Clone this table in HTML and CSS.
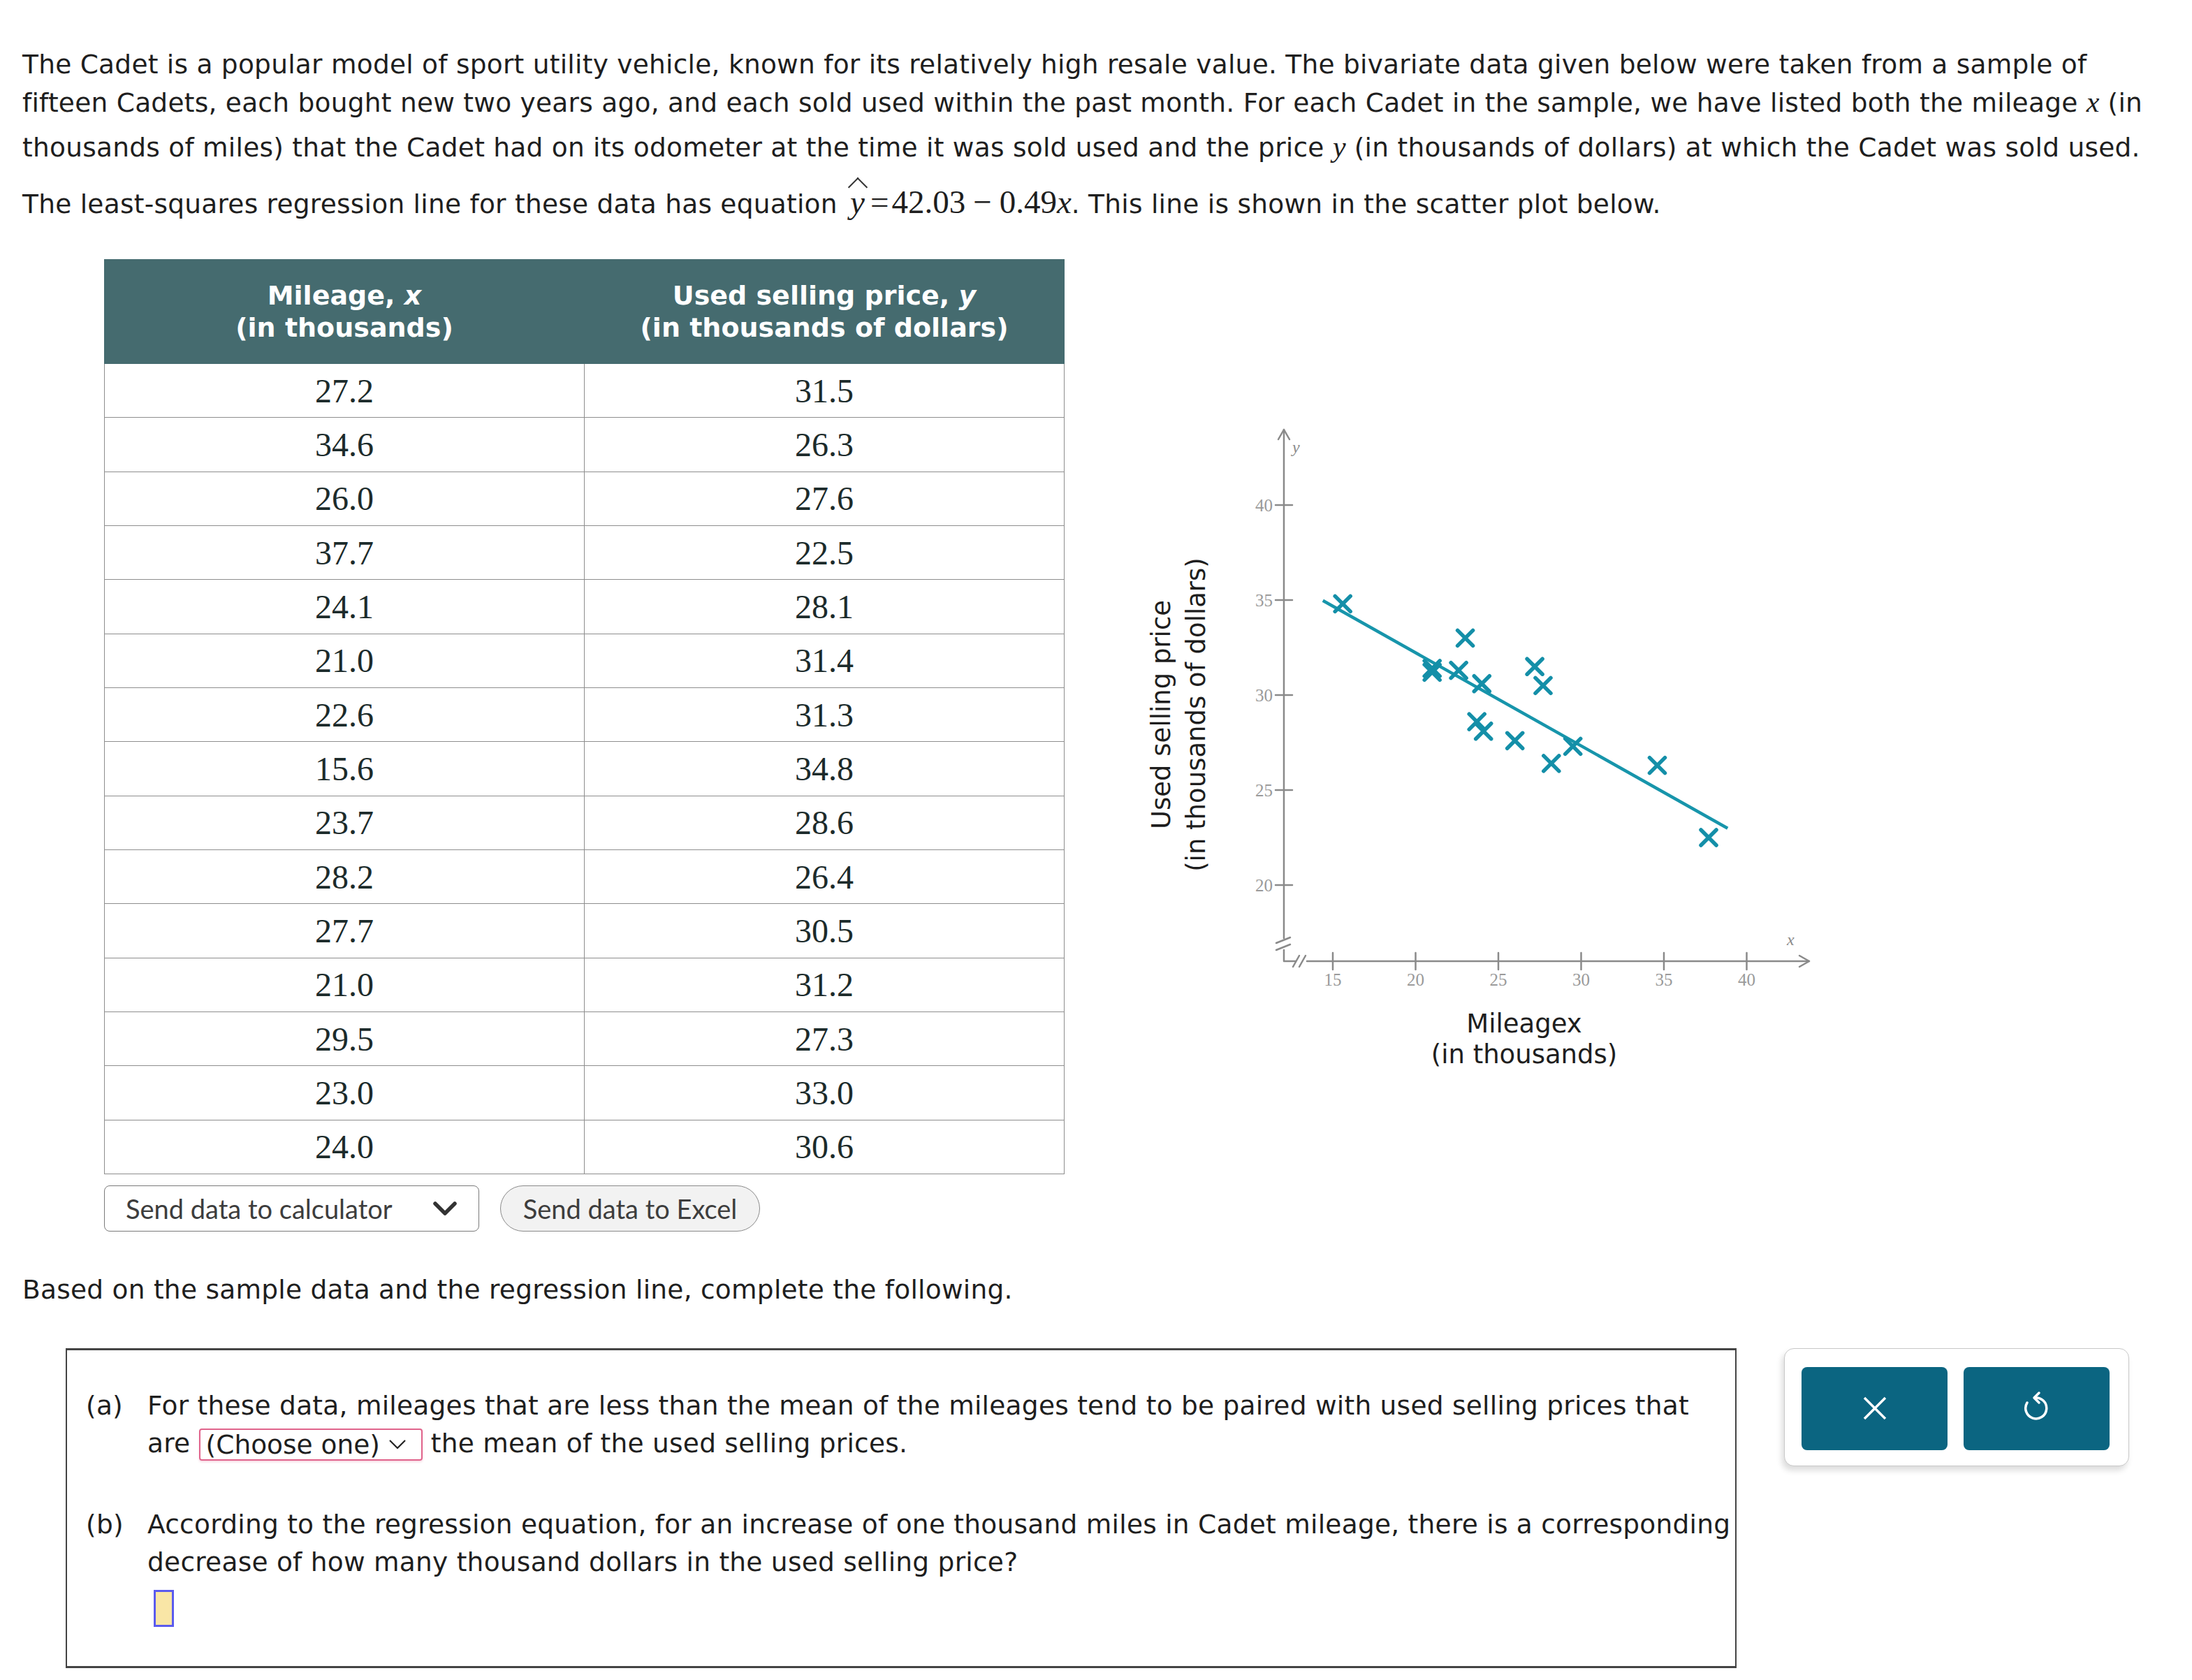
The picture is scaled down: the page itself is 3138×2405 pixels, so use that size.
FILE: index.html
```html
<!DOCTYPE html>
<html lang="en">
<head>
<meta charset="utf-8">
<title>Cadet regression</title>
<link rel="stylesheet" href="styles.css">
</head>
<body>
<div class="page">
  <p class="intro">The Cadet is a popular model of sport utility vehicle, known for its relatively high resale value. The bivariate data given below were taken from a sample of<br>fifteen Cadets, each bought new two years ago, and each sold used within the past month. For each Cadet in the sample, we have listed both the mileage <span class="mv">x</span> (in<br>thousands of miles) that the Cadet had on its odometer at the time it was sold used and the price <span class="mv">y</span> (in thousands of dollars) at which the Cadet was sold used.<br>The least-squares regression line for these data has equation <span class="eq"><span class="mv hat">y</span><span class="op op-eq">=</span>42.03<span class="op">&minus;</span>0.49<span class="mvi">x</span></span>. This line is shown in the scatter plot below.</p>

  <div class="data-row">
    <div class="table-col">
      <table class="data-table">
        <thead>
          <tr><th>Mileage, <i>x</i><br>(in thousands)</th><th>Used selling price, <i>y</i><br>(in thousands of dollars)</th></tr>
        </thead>
        <tbody>
          <tr><td>27.2</td><td>31.5</td></tr>
          <tr><td>34.6</td><td>26.3</td></tr>
          <tr><td>26.0</td><td>27.6</td></tr>
          <tr><td>37.7</td><td>22.5</td></tr>
          <tr><td>24.1</td><td>28.1</td></tr>
          <tr><td>21.0</td><td>31.4</td></tr>
          <tr><td>22.6</td><td>31.3</td></tr>
          <tr><td>15.6</td><td>34.8</td></tr>
          <tr><td>23.7</td><td>28.6</td></tr>
          <tr><td>28.2</td><td>26.4</td></tr>
          <tr><td>27.7</td><td>30.5</td></tr>
          <tr><td>21.0</td><td>31.2</td></tr>
          <tr><td>29.5</td><td>27.3</td></tr>
          <tr><td>23.0</td><td>33.0</td></tr>
          <tr><td>24.0</td><td>30.6</td></tr>
        </tbody>
      </table>
      <div class="actions">
        <div class="calc-select"><span>Send data to calculator</span>
          <svg class="chev" width="36" height="22" viewBox="0 0 36 22"><polyline points="4,4 18,18 32,4" fill="none" stroke="#333" stroke-width="5.5" stroke-linecap="round" stroke-linejoin="round"/></svg>
        </div>
        <div class="excel-btn">Send data to Excel</div>
      </div>
    </div>

    <svg class="chart" width="1040" height="1000" viewBox="1600 580 1040 1000">
      <defs>
        <path id="mk" d="M-11 -11 L11 11 M11 -11 L-11 11" fill="none" stroke="#148fa8" stroke-width="5.5" stroke-linecap="round"/>
      </defs>
      <g stroke="#8a8a8a" stroke-width="2.5" fill="none" stroke-linecap="round" stroke-linejoin="round">
        <line x1="1838" y1="612" x2="1838" y2="1340"/>
        <line x1="1827" y1="1347" x2="1847" y2="1339"/>
        <line x1="1827" y1="1357" x2="1847" y2="1349"/>
        <polyline points="1838,1357 1838,1373 1855,1373"/>
        <line x1="1851" y1="1381" x2="1860" y2="1365"/>
        <line x1="1860" y1="1381" x2="1869" y2="1365"/>
        <line x1="1871" y1="1373" x2="2590" y2="1373"/>
        <polyline points="1830,626 1838,612 1846,626"/>
        <polyline points="2576,1365 2590,1373 2576,1381"/>
        <line x1="1826" y1="720" x2="1850" y2="720"/>
        <line x1="1826" y1="856" x2="1850" y2="856"/>
        <line x1="1826" y1="992" x2="1850" y2="992"/>
        <line x1="1826" y1="1128" x2="1850" y2="1128"/>
        <line x1="1826" y1="1264" x2="1850" y2="1264"/>
        <line x1="1908" y1="1361" x2="1908" y2="1385"/>
        <line x1="2026.5" y1="1361" x2="2026.5" y2="1385"/>
        <line x1="2145" y1="1361" x2="2145" y2="1385"/>
        <line x1="2263.5" y1="1361" x2="2263.5" y2="1385"/>
        <line x1="2382" y1="1361" x2="2382" y2="1385"/>
        <line x1="2500.5" y1="1361" x2="2500.5" y2="1385"/>
      </g>
      <g class="tick-lab ylab">
        <text x="1822" y="729">40</text>
        <text x="1822" y="865">35</text>
        <text x="1822" y="1001">30</text>
        <text x="1822" y="1137">25</text>
        <text x="1822" y="1273">20</text>
      </g>
      <g class="tick-lab xlab">
        <text x="1908" y="1408">15</text>
        <text x="2026.5" y="1408">20</text>
        <text x="2145" y="1408">25</text>
        <text x="2263.5" y="1408">30</text>
        <text x="2382" y="1408">35</text>
        <text x="2500.5" y="1408">40</text>
      </g>
      <text class="axis-var" x="1850" y="645">y</text>
      <text class="axis-var" x="2558" y="1350">x</text>
      <line x1="1893.8" y1="856.7" x2="2473.2" y2="1182.7" stroke="#1795ab" stroke-width="4.5"/>
      <g>
        <use href="#mk" x="2197.1" y="951.2"/>
        <use href="#mk" x="2372.5" y="1092.6"/>
        <use href="#mk" x="2168.7" y="1057.3"/>
        <use href="#mk" x="2446" y="1196"/>
        <use href="#mk" x="2123.7" y="1043.7"/>
        <use href="#mk" x="2050.2" y="953.9"/>
        <use href="#mk" x="2088.1" y="956.6"/>
        <use href="#mk" x="1922.2" y="861.4"/>
        <use href="#mk" x="2114.2" y="1030.1"/>
        <use href="#mk" x="2220.8" y="1089.9"/>
        <use href="#mk" x="2209" y="978.4"/>
        <use href="#mk" x="2050.2" y="959.4"/>
        <use href="#mk" x="2251.7" y="1065.4"/>
        <use href="#mk" x="2097.6" y="910.4"/>
        <use href="#mk" x="2121.3" y="975.7"/>
      </g>
      <g class="axis-title">
        <text x="1662" y="1020" transform="rotate(-90 1662 1020)">Used selling price</text>
        <text x="1712" y="1020" transform="rotate(-90 1712 1020)">(in thousands of dollars)</text>
        <text x="2182" y="1462">Mileagex</text>
        <text x="2182" y="1506">(in thousands)</text>
      </g>
    </svg>
  </div>

  <p class="prompt">Based on the sample data and the regression line, complete the following.</p>

  <div class="question-row">
    <div class="qbox">
      <div class="part">
        <div class="plabel">(a)</div>
        <div class="ptext">For these data, mileages that are less than the mean of the mileages tend to be paired with used selling prices that<br>are <span class="choose">(Choose one)<svg class="thin-chev" width="26" height="16" viewBox="0 0 26 16"><polyline points="2,2 13,13 24,2" fill="none" stroke="#222" stroke-width="2.2"/></svg></span> the mean of the used selling prices.</div>
      </div>
      <div class="part part-b">
        <div class="plabel">(b)</div>
        <div class="ptext">According to the regression equation, for an increase of one thousand miles in Cadet mileage, there is a corresponding<br>decrease of how many thousand dollars in the used selling price?
          <span class="answer"></span>
        </div>
      </div>
    </div>
    <div class="tools">
      <button class="tool-btn" aria-label="Clear">
        <svg width="36" height="36" viewBox="0 0 36 36"><path d="M3 3 L33 33 M33 3 L3 33" stroke="#fff" stroke-width="3.5" fill="none"/></svg>
      </button>
      <button class="tool-btn" aria-label="Undo">
        <svg width="44" height="50" viewBox="0 0 44 50"><path d="M19 10 A15 15 0 1 1 8 17" fill="none" stroke="#fff" stroke-width="3.5" stroke-linecap="round"/><polyline points="25,3 18,10 25,17" fill="none" stroke="#fff" stroke-width="3.5" stroke-linecap="round" stroke-linejoin="round"/></svg>
      </button>
    </div>
  </div>
</div>
</body>
</html>
```

FILE: styles.css
```css
* { box-sizing: border-box; }

body {
  margin: 0;
  background: #ffffff;
  font-family: "DejaVu Sans", Verdana, sans-serif;
  color: #1e1e1e;
}

.page {
  padding: 65px 40px 40px 32px;
}

.intro {
  margin: 0;
  font-size: 37.5px;
  letter-spacing: 0.25px;
  line-height: 55px;
  white-space: nowrap;
}

.mv {
  display: inline-block;
  font-family: "Liberation Serif", "Times New Roman", serif;
  font-style: italic;
  font-size: 42px;
  line-height: 40px;
  padding-bottom: 18px;
  letter-spacing: 0;
}

.eq {
  font-family: "Liberation Serif", "Times New Roman", serif;
  font-size: 47px;
  letter-spacing: 0;
  margin-left: 6px;
}

.eq .op {
  margin: 0 11px;
}

.eq .op.op-eq {
  margin-left: 8px;
  margin-right: 4px;
}

.mv.hat {
  position: relative;
  font-size: 47px;
  padding-bottom: 0;
  padding-top: 21px;
}

.mv.hat::before {
  content: "";
  position: absolute;
  left: 55%;
  top: 10px;
  width: 18px;
  height: 18px;
  border-top: 2px solid #333;
  border-left: 2px solid #333;
  transform: translateX(-50%) rotate(45deg);
}

.mvi {
  font-style: italic;
}

.data-row {
  display: flex;
  align-items: flex-start;
  margin-top: 51px;
}

.table-col {
  margin-left: 117px;
  width: 1375px;
}

.data-table {
  width: 1375px;
  border-collapse: collapse;
  table-layout: fixed;
}

.data-table th {
  background: #456b6f;
  color: #ffffff;
  font-weight: bold;
  font-size: 38px;
  line-height: 46px;
  padding: 28px 0;
  border: 1px solid #456b6f;
}

.data-table th + th {
  border-left: 1px solid #6f8f92;
}

.data-table td {
  height: 77.33px;
  padding: 0;
  text-align: center;
  font-family: "Liberation Serif", "Times New Roman", serif;
  font-size: 48px;
  color: #1c2b2b;
  border: 1.5px solid #8e8e8e;
}

.actions {
  display: flex;
  gap: 30px;
  margin-top: 16px;
  font-family: Lato, "Open Sans", sans-serif;
  font-size: 38px;
  color: #3d3d3d;
}

.calc-select {
  width: 537px;
  height: 66px;
  border: 1.5px solid #7a7a7a;
  border-radius: 8px;
  display: flex;
  align-items: center;
  justify-content: space-between;
  padding: 0 30px 0 30px;
}

.excel-btn {
  width: 372px;
  height: 66px;
  border: 1.5px solid #8a8a8a;
  border-radius: 33px;
  background: #f2f2f2;
  display: flex;
  align-items: center;
  justify-content: center;
}

.chart {
  display: block;
  margin-left: 76px;
  margin-top: 212px;
  flex: none;
}

.tick-lab {
  font-family: "Liberation Serif", "Times New Roman", serif;
  font-size: 25px;
  fill: #9a9a9a;
}

.ylab text { text-anchor: end; }
.xlab text { text-anchor: middle; }

.axis-var {
  font-family: "Liberation Serif", "Times New Roman", serif;
  font-style: italic;
  font-size: 24px;
  fill: #8a8a8a;
}

.axis-title text {
  font-family: "DejaVu Sans", Verdana, sans-serif;
  font-size: 37px;
  fill: #1e1e1e;
  text-anchor: middle;
  dominant-baseline: central;
}

.prompt {
  margin: 56px 0 0 0;
  font-size: 37.5px;
  letter-spacing: 0.25px;
  line-height: 55px;
}

.question-row {
  display: flex;
  align-items: flex-start;
  gap: 68px;
  margin: 56px 0 0 62px;
}

.qbox {
  width: 2392px;
  height: 458px;
  border: 2px solid #444;
  border-top-width: 3px;
  border-bottom-width: 3px;
  padding: 52px 2px 0 27px;
  font-size: 37.5px;
  letter-spacing: 0.25px;
  line-height: 54px;
  flex: none;
}

.part {
  display: grid;
  grid-template-columns: 88px auto;
  white-space: nowrap;
}

.part-b {
  margin-top: 62px;
}

.choose {
  display: inline-flex;
  align-items: center;
  gap: 12px;
  width: 320px;
  height: 46px;
  padding-left: 8px;
  border: 2px solid #e0648c;
  border-radius: 4px;
  box-shadow: 0 2px 3px rgba(224, 100, 140, 0.25);
  vertical-align: middle;
  line-height: 42px;
  letter-spacing: 0;
}

.answer {
  display: block;
  width: 29px;
  height: 53px;
  margin: 13px 0 0 9px;
  background: #f9e6a6;
  border: 3px solid #5b5bee;
}

.tools {
  width: 494px;
  height: 169px;
  border: 1px solid #c8c8c8;
  border-radius: 14px;
  box-shadow: -3px 6px 8px rgba(0, 0, 0, 0.14);
  padding: 26px 26px 22px 24px;
  display: flex;
  gap: 23px;
  background: #fff;
  flex: none;
}

.tool-btn {
  width: 209px;
  height: 119px;
  border: none;
  border-radius: 8px;
  background: #0b6581;
  display: flex;
  align-items: center;
  justify-content: center;
  padding: 0;
}
```
